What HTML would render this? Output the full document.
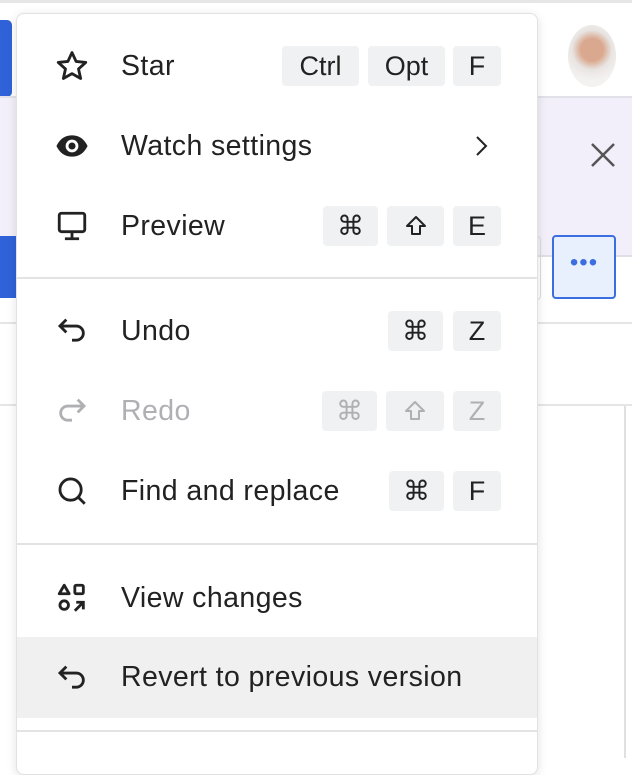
<!DOCTYPE html>
<html><head><style>
body{margin:0;width:632px;height:758px;overflow:hidden;background:#fff;font-family:"Liberation Sans",sans-serif;position:relative}
.a{position:absolute}
.menu{position:absolute;left:16px;top:13px;width:520px;height:760px;background:#fff;border:1px solid #e2e2e2;border-radius:8px;box-shadow:0 2px 10px rgba(0,0,0,.12)}
.it{position:absolute;left:0;width:520px;height:80px;display:flex;align-items:center}
.it svg{position:absolute;left:38px}
.it .t{position:absolute;left:104px;font-size:28.5px;letter-spacing:0.4px;color:#222}
.k{position:absolute;top:20px;height:40px;background:#f0f1f3;border-radius:4px;font-size:27px;color:#222;display:flex;align-items:center;justify-content:center}
.k svg{position:static}
.dis .t,.dis .k{color:#b0b0b4}
.sep{position:absolute;left:0;width:520px;height:2px;background:#e3e3e3}
</style></head><body>
<div class="a" style="left:0;top:0;width:632px;height:3px;background:#e6e6e6"></div>
<div class="a" style="left:0;top:20px;width:12px;height:77px;background:#2f62d8;border-radius:0 5px 5px 0"></div>
<div class="a" style="left:0;top:96px;width:632px;height:157px;background:#f3effa;border-top:2px solid #e2e0e8;border-bottom:2px solid #e0dde6"></div>
<div class="a" style="left:568px;top:25px;width:48px;height:62px;border-radius:50%;background:radial-gradient(circle at 50% 40%,#d9a88e 0 25%,#e8e4e2 45%,#f4f2f1 70%)"></div>
<svg class="a" style="left:590px;top:142px" width="26" height="26"><path d="M2 2L24 24M24 2L2 24" stroke="#555" stroke-width="2.5"/></svg>
<div class="a" style="left:0;top:236px;width:16px;height:62px;background:#2f62d8"></div>
<div class="a" style="left:520px;top:236px;width:19px;height:62px;border:1px solid #ddd;border-radius:4px"></div>
<div class="a" style="left:552px;top:235px;width:60px;height:60px;border:2px solid #3b6fe0;border-radius:4px;background:#e9f0fd;color:#3b6fe0;font-size:24px;text-align:center;line-height:52px;letter-spacing:1px">•••</div>
<div class="a" style="left:0;top:322px;width:632px;height:2px;background:#e6e6e6"></div>
<div class="a" style="left:0;top:404px;width:632px;height:2px;background:#e6e6e6"></div>
<div class="a" style="left:624px;top:406px;width:2px;height:352px;background:#e0e0e0"></div>
<div class="menu">
<div class="it" style="top:12px"><svg width="34" height="34" viewBox="0 0 24 24"><path d="M12 2.5l2.9 6.3 6.8.7-5.1 4.6 1.5 6.7L12 17.4l-6.1 3.4 1.5-6.7-5.1-4.6 6.8-.7z" fill="none" stroke="#222" stroke-width="2" stroke-linejoin="round"/></svg><span class="t">Star</span>
<span class="k" style="left:265px;width:77px">Ctrl</span><span class="k" style="left:351px;width:77px">Opt</span><span class="k" style="left:436px;width:48px">F</span></div>
<div class="it" style="top:92px"><svg width="34" height="34" viewBox="0 0 24 24"><path d="M1 12C4 6 8 4.5 12 4.5S20 6 23 12c-3 6-7 7.5-11 7.5S4 18 1 12z" fill="#222"/><circle cx="12" cy="12" r="4.5" fill="#fff"/><circle cx="12" cy="12" r="2.5" fill="#222"/></svg><span class="t">Watch settings</span>
<svg style="left:456px" width="16" height="24" viewBox="0 0 16 24"><path d="M4 3l9 9-9 9" fill="none" stroke="#222" stroke-width="2"/></svg></div>
<div class="it" style="top:172px"><svg width="34" height="34" viewBox="0 0 24 24"><rect x="3" y="3" width="18" height="13" rx="1.5" fill="none" stroke="#222" stroke-width="2"/><path d="M12 16v4M7 21h10" stroke="#222" stroke-width="2"/></svg><span class="t">Preview</span>
<span class="k" style="left:306px;width:55px">⌘</span><span class="k" style="left:370px;width:57px"><svg width="22" height="22" viewBox="0 0 22 22"><path d="M11 2L2 11h5v8h8v-8h5z" fill="none" stroke="#222" stroke-width="2" stroke-linejoin="round"/></svg></span><span class="k" style="left:436px;width:48px">E</span></div>
<div class="sep" style="top:263px"></div>
<div class="it" style="top:277px"><svg width="34" height="34" viewBox="0 0 24 24"><path d="M8 4L3.5 8.5 8 13M3.5 8.5H15a5 5 0 010 10h-3" fill="none" stroke="#222" stroke-width="2"/></svg><span class="t">Undo</span>
<span class="k" style="left:371px;width:55px">⌘</span><span class="k" style="left:436px;width:48px">Z</span></div>
<div class="it dis" style="top:357px"><svg width="34" height="34" viewBox="0 0 24 24"><path d="M16 4l4.5 4.5L16 13M20.5 8.5H9a5 5 0 000 10h3" fill="none" stroke="#b0b0b4" stroke-width="2"/></svg><span class="t">Redo</span>
<span class="k" style="left:305px;width:55px">⌘</span><span class="k" style="left:369px;width:58px"><svg width="22" height="22" viewBox="0 0 22 22"><path d="M11 2L2 11h5v8h8v-8h5z" fill="none" stroke="#b0b0b4" stroke-width="2" stroke-linejoin="round"/></svg></span><span class="k" style="left:436px;width:48px">Z</span></div>
<div class="it" style="top:437px"><svg width="34" height="34" viewBox="0 0 24 24"><circle cx="11" cy="11" r="7.5" fill="none" stroke="#222" stroke-width="2"/><path d="M16.5 16.5L21 21" stroke="#222" stroke-width="2"/></svg><span class="t">Find and replace</span>
<span class="k" style="left:372px;width:55px">⌘</span><span class="k" style="left:436px;width:48px">F</span></div>
<div class="sep" style="top:529px"></div>
<div class="it" style="top:544px"><svg width="34" height="34" viewBox="0 0 24 24"><path d="M6.5 3L10 9H3z" fill="none" stroke="#222" stroke-width="2" stroke-linejoin="round"/><rect x="14" y="3" width="6" height="6" rx="1" fill="none" stroke="#222" stroke-width="2"/><circle cx="6.5" cy="17" r="3" fill="none" stroke="#222" stroke-width="2"/><path d="M14 21l6-6M15 15h5v5" fill="none" stroke="#222" stroke-width="2"/></svg><span class="t">View changes</span></div>
<div class="it" style="top:623px;background:#f0f0f0;height:81px"><svg width="34" height="34" viewBox="0 0 24 24"><path d="M8 4L3.5 8.5 8 13M3.5 8.5H15a5 5 0 010 10h-3" fill="none" stroke="#222" stroke-width="2"/></svg><span class="t">Revert to previous version</span></div>
<div class="sep" style="top:716px"></div>
</div>
</body></html>
